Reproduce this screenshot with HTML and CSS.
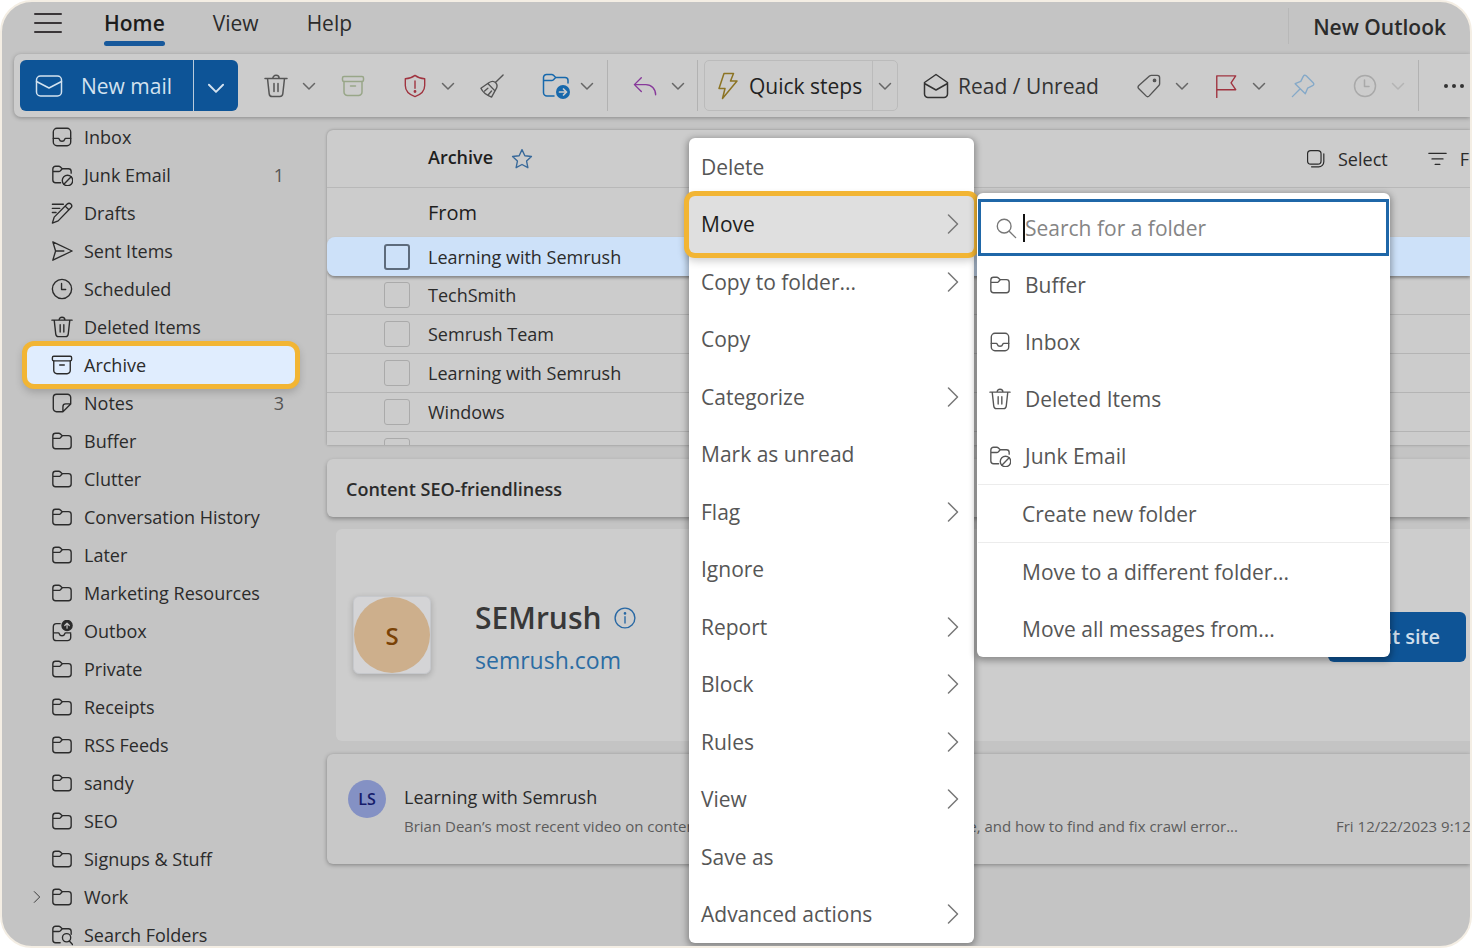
FILE: index.html
```html
<!DOCTYPE html>
<html lang="en">
<head>
    <meta charset="UTF-8">
    <title>Archive - Outlook</title>
    <link rel="stylesheet" href="styles.css">
</head>
<body>
<!-- icons -->
<svg class="sprite" aria-hidden="true">
    <symbol id="i-folder" viewBox="0 0 24 24"><path d="M2 17.500V6.500a3 3 0 0 1 3-3h3.500c.8 0 1.300.3 1.800.8l1.900 1.900H19a3 3 0 0 1 3 3v8.300a3 3 0 0 1-3 3H5a3 3 0 0 1-3-3zM2 9.200h6.500c.8 0 1.300-.3 1.800-.8l2-2.200"/></symbol>
    <symbol id="i-inbox" viewBox="0 0 24 24"><rect x="2.500" y="2.500" width="19" height="19" rx="4"/><path d="M2.500 13.500h5.500c.6 0 .8.400 1 1 .4 1.300 1.500 2.200 3 2.200s2.600-.9 3-2.200c.2-.6.4-1 1-1h5.500"/></symbol>
    <symbol id="i-junk" viewBox="0 0 24 24"><path d="M10.500 20.500H5a3 3 0 0 1-3-3V5.500a3 3 0 0 1 3-3h3.500c.8 0 1.300.3 1.800.8l1.900 1.900H19a3 3 0 0 1 3 3V10M2 8.200h6.500c.8 0 1.300-.3 1.800-.8l2-2.200"/><circle cx="18" cy="18" r="5.700"/><path d="M14 22l8-8"/></symbol>
    <symbol id="i-drafts" viewBox="0 0 24 24"><path d="M1.500 23l2-6.500L17.700 2.300a2.700 2.700 0 0 1 4 4L7.800 20.600zM15.500 4.500l4 4M1.500 2.500h12M1.500 7h8M1.500 11.500h4"/></symbol>
    <symbol id="i-sent" viewBox="0 0 24 24"><path d="M2 2l21 10L2 22l3-10zM5 12h9"/></symbol>
    <symbol id="i-clock" viewBox="0 0 24 24"><circle cx="12" cy="12" r="10.500"/><path d="M11.500 6v6.500H16"/></symbol>
    <symbol id="i-trash" viewBox="0 0 24 24"><path d="M1 4.500h22M8.800 4.500a3.200 3.200 0 0 1 6.400 0M3.500 4.500l1.700 15.300a3 3 0 0 0 3 2.700h7.600a3 3 0 0 0 3-2.700l1.700-15.300M10 9.500v8M14 9.500v8"/></symbol>
    <symbol id="i-archive" viewBox="0 0 24 24"><rect x="1.500" y="2.500" width="21" height="5" rx="1.500"/><path d="M3 7.500v10.500a3.500 3.500 0 0 0 3.500 3.500h11a3.500 3.500 0 0 0 3.500-3.500V7.500M9.500 12h5"/></symbol>
    <symbol id="i-note" viewBox="0 0 24 24"><path d="M13 21.500H6a3.500 3.500 0 0 1-3.500-3.500V6A3.500 3.500 0 0 1 6 2.500h12A3.500 3.500 0 0 1 21.500 6v7zM21.500 13H16a3 3 0 0 0-3 3v5.500"/></symbol>
    <symbol id="i-outbox" viewBox="0 0 24 24"><path d="M10 4H6a3.500 3.500 0 0 0-3.500 3.500V19A3.500 3.500 0 0 0 6 22.500h12a3.500 3.500 0 0 0 3.500-3.500v-4M2.500 14h5.500c.6 0 .8.400 1 1 .4 1.300 1.500 2.200 3 2.200s2.600-.9 3-2.200c.2-.6.4-1 1-1h5.500"/><circle cx="17.500" cy="6" r="5.500" fill="currentColor"/><path d="M17.500 9V3.500M15 6l2.500-2.500L20 6" stroke="#c4c4c4" stroke-width="1.300"/></symbol>
    <symbol id="i-searchfolder" viewBox="0 0 24 24"><path d="M10 20.500H5a3 3 0 0 1-3-3V5.500a3 3 0 0 1 3-3h3.500c.8 0 1.300.3 1.800.8l1.900 1.900H19a3 3 0 0 1 3 3v3M2 8.200h6.500c.8 0 1.300-.3 1.800-.8l2-2.200"/><circle cx="17" cy="15" r="4.500"/><path d="M20 18.500l3.500 4"/></symbol>
    <symbol id="i-down" viewBox="0 0 14 14"><path d="M1.500 4.500l5.500 5.500 5.500-5.500"/></symbol>
    <symbol id="i-right" viewBox="0 0 12 20"><path d="M1.500 1l9 9-9 9"/></symbol>
    <symbol id="i-mail" viewBox="0 0 28 24"><rect x="1.500" y="2" width="25" height="20" rx="4"/><path d="M1.500 7.500L14 14l12.500-6.500"/></symbol>
    <symbol id="i-shield" viewBox="0 0 24 26"><path d="M12 1.500c3 2.300 6.300 3.500 10.500 3.700v7.300c0 5.700-3.800 9.700-10.500 12-6.700-2.300-10.500-6.300-10.500-12V5.200C5.700 5 9 3.800 12 1.500zM12 7.500v8"/><circle cx="12" cy="19" r=".8" fill="currentColor"/></symbol>
    <symbol id="i-broom" viewBox="0 0 26 26"><path d="M25 1l-8.300 8.300M1 15.500l8.500-6c3-2 6-1.500 7.500 0s2 4.500 0 7.500L12.500 25c-4-1.500-9.500-5-11.500-9.500zM8.500 10.300l7.700 8M5 18.500l3.500-3M9 22.500l3.500-4"/></symbol>
    <symbol id="i-moveto" viewBox="0 0 28 26"><path d="M12 23H5a3.500 3.500 0 0 1-3.500-3.500v-15a3 3 0 0 1 3-3h5.200c.8 0 1.300.3 1.800.8l2.200 2.200h9.300a3 3 0 0 1 3 3V10M1.500 7.500h8.200c.8 0 1.300-.3 1.800-.8l2.200-2.200"/><circle cx="21" cy="19" r="7" fill="currentColor" stroke="none"/><path d="M17.500 19h7M21.500 16l3 3-3 3" stroke="#ccc" stroke-width="1.700"/></symbol>
    <symbol id="i-reply" viewBox="0 0 26 26"><path d="M9 4L1.500 11.500 9 19M1.500 11.500H14c6 0 10.500 4.500 10.500 11"/></symbol>
    <symbol id="i-bolt" viewBox="0 0 22 28"><path d="M7 1.500h9.500l-3 7.500H20L5.500 26.500 8 16.500H2z"/></symbol>
    <symbol id="i-open" viewBox="0 0 26 26"><path d="M1.500 9.500L13 1.500l11.500 8V21a3.500 3.500 0 0 1-3.500 3.500H5A3.500 3.500 0 0 1 1.500 21zM1.500 10.500L13 17l11.500-6.500"/></symbol>
    <symbol id="i-tag" viewBox="0 0 26 26"><path d="M15.500 1.500H22a2.500 2.500 0 0 1 2.500 2.500v6.500c0 .8-.3 1.500-.8 2L13.300 23.700a2.500 2.500 0 0 1-3.500 0L2 16a2.500 2.500 0 0 1 0-3.500L13.500 2.200c.5-.4 1.200-.7 2-.7z"/><circle cx="19" cy="7" r="1.300" fill="currentColor"/></symbol>
    <symbol id="i-flag" viewBox="0 0 24 26"><path d="M2 25.500V2h20.500l-5 7.500 5 7.500H2"/></symbol>
    <symbol id="i-pin" viewBox="0 0 26 26"><path d="M16.500 2l7.500 7.500c1.200 1.200.8 2.600-.6 3.200l-5.400 2.700-2.500 6.100-11-11 6.100-2.500 2.700-5.400c.6-1.400 2-1.800 3.200-.6zM10 16l-8.500 8.500"/></symbol>
    <symbol id="i-star" viewBox="0 0 24 24"><path d="M12 1.800l3.100 6.600 7.200.9-5.300 5 1.400 7.200L12 18l-6.400 3.500L7 14.300l-5.300-5 7.200-.9z"/></symbol>
    <symbol id="i-select" viewBox="0 0 24 24"><rect x="2" y="2" width="17" height="17" rx="4"/><path d="M7 22.500h9a6.500 6.500 0 0 0 6.500-6.500V6"/></symbol>
    <symbol id="i-filter" viewBox="0 0 24 24"><path d="M1 5.500h22M5 12.500h14M9 19.500h6"/></symbol>
    <symbol id="i-info" viewBox="0 0 24 24"><circle cx="12" cy="12" r="10.800"/><path d="M12 10.500v7"/><circle cx="12" cy="7" r=".7" fill="currentColor"/></symbol>
    <symbol id="i-search" viewBox="0 0 24 24"><circle cx="10" cy="10" r="7.500"/><path d="M15.500 15.500l7 7"/></symbol>
</svg>

<div class="app">
    <header class="top">
        <button class="burger" aria-label="Menu"><span></span><span></span><span></span></button>
        <nav class="tabs">
            <a href="#" class="active">Home</a>
            <a href="#">View</a>
            <a href="#">Help</a>
        </nav>
        <div class="brand">New Outlook</div>
    </header>

    <div class="toolbar">
        <div class="newmail">
            <button class="new-main"><svg class="icon mail"><use href="#i-mail"/></svg>New mail</button>
            <button class="new-more" aria-label="More new items"><svg class="icon down"><use href="#i-down"/></svg></button>
        </div>
        <div class="group">
            <button class="tool" aria-label="Delete"><svg class="icon"><use href="#i-trash"/></svg><svg class="icon chev"><use href="#i-down"/></svg></button>
            <button class="tool green" aria-label="Archive"><svg class="icon"><use href="#i-archive"/></svg></button>
            <button class="tool red" aria-label="Report"><svg class="icon"><use href="#i-shield"/></svg><svg class="icon chev"><use href="#i-down"/></svg></button>
            <button class="tool" aria-label="Sweep"><svg class="icon"><use href="#i-broom"/></svg></button>
            <button class="tool blue" aria-label="Move to"><svg class="icon wide"><use href="#i-moveto"/></svg><svg class="icon chev"><use href="#i-down"/></svg></button>
        </div>
        <div class="group line">
            <button class="tool purple" aria-label="Reply"><svg class="icon"><use href="#i-reply"/></svg><svg class="icon chev"><use href="#i-down"/></svg></button>
        </div>
        <div class="quick">
            <button class="quick-main"><svg class="icon bolt"><use href="#i-bolt"/></svg>Quick steps</button>
            <button class="quick-more" aria-label="More quick steps"><svg class="icon chev"><use href="#i-down"/></svg></button>
        </div>
        <div class="group">
            <button class="tool read"><svg class="icon wide"><use href="#i-open"/></svg>Read / Unread</button>
            <button class="tool" aria-label="Categorize"><svg class="icon"><use href="#i-tag"/></svg><svg class="icon chev"><use href="#i-down"/></svg></button>
            <button class="tool red" aria-label="Flag"><svg class="icon"><use href="#i-flag"/></svg><svg class="icon chev"><use href="#i-down"/></svg></button>
            <button class="tool pale" aria-label="Pin"><svg class="icon"><use href="#i-pin"/></svg></button>
            <button class="tool off" aria-label="Snooze"><svg class="icon"><use href="#i-clock"/></svg><svg class="icon chev"><use href="#i-down"/></svg></button>
        </div>
        <div class="group line">
            <button class="dots" aria-label="More options"><span></span><span></span><span></span></button>
        </div>
    </div>

    <div class="main">
        <ul class="folders">
            <li><a href="#"><svg class="icon"><use href="#i-inbox"/></svg>Inbox</a></li>
            <li><a href="#"><svg class="icon"><use href="#i-junk"/></svg>Junk Email<b>1</b></a></li>
            <li><a href="#"><svg class="icon"><use href="#i-drafts"/></svg>Drafts</a></li>
            <li><a href="#"><svg class="icon"><use href="#i-sent"/></svg>Sent Items</a></li>
            <li><a href="#"><svg class="icon"><use href="#i-clock"/></svg>Scheduled</a></li>
            <li><a href="#"><svg class="icon"><use href="#i-trash"/></svg>Deleted Items</a></li>
            <li><a href="#" class="active"><svg class="icon"><use href="#i-archive"/></svg>Archive</a></li>
            <li><a href="#"><svg class="icon"><use href="#i-note"/></svg>Notes<b>3</b></a></li>
            <li><a href="#"><svg class="icon"><use href="#i-folder"/></svg>Buffer</a></li>
            <li><a href="#"><svg class="icon"><use href="#i-folder"/></svg>Clutter</a></li>
            <li><a href="#"><svg class="icon"><use href="#i-folder"/></svg>Conversation History</a></li>
            <li><a href="#"><svg class="icon"><use href="#i-folder"/></svg>Later</a></li>
            <li><a href="#"><svg class="icon"><use href="#i-folder"/></svg>Marketing Resources</a></li>
            <li><a href="#"><svg class="icon"><use href="#i-outbox"/></svg>Outbox</a></li>
            <li><a href="#"><svg class="icon"><use href="#i-folder"/></svg>Private</a></li>
            <li><a href="#"><svg class="icon"><use href="#i-folder"/></svg>Receipts</a></li>
            <li><a href="#"><svg class="icon"><use href="#i-folder"/></svg>RSS Feeds</a></li>
            <li><a href="#"><svg class="icon"><use href="#i-folder"/></svg>sandy</a></li>
            <li><a href="#"><svg class="icon"><use href="#i-folder"/></svg>SEO</a></li>
            <li><a href="#"><svg class="icon"><use href="#i-folder"/></svg>Signups &amp; Stuff</a></li>
            <li><a href="#" class="parent"><svg class="icon expand"><use href="#i-right"/></svg><svg class="icon"><use href="#i-folder"/></svg>Work</a></li>
            <li><a href="#"><svg class="icon"><use href="#i-searchfolder"/></svg>Search Folders</a></li>
        </ul>

        <div class="content">
            <section class="list">
                <div class="list-head">
                    <h2>Archive</h2>
                    <button class="star" aria-label="Add to favorites"><svg class="icon"><use href="#i-star"/></svg></button>
                    <div class="list-tools">
                        <button><svg class="icon"><use href="#i-select"/></svg>Select</button>
                        <button><svg class="icon"><use href="#i-filter"/></svg>Filter</button>
                    </div>
                </div>
                <table>
                    <thead>
                        <tr><th class="check"></th><th>From</th></tr>
                    </thead>
                    <tbody>
                        <tr class="selected"><td class="check"><input type="checkbox" id="m1"></td><td><label for="m1">Learning with Semrush</label></td></tr>
                        <tr><td class="check"><input type="checkbox" id="m2"></td><td><label for="m2">TechSmith</label></td></tr>
                        <tr><td class="check"><input type="checkbox" id="m3"></td><td><label for="m3">Semrush Team</label></td></tr>
                        <tr><td class="check"><input type="checkbox" id="m4"></td><td><label for="m4">Learning with Semrush</label></td></tr>
                        <tr><td class="check"><input type="checkbox" id="m5"></td><td><label for="m5">Windows</label></td></tr>
                        <tr><td class="check"><input type="checkbox" id="m6" aria-label="Select message"></td><td></td></tr>
                    </tbody>
                </table>
            </section>

            <h3 class="subject">Content SEO-friendliness</h3>

            <section class="sender">
                <div class="logo"><span>S</span></div>
                <div class="sender-info">
                    <h1>SEMrush <svg class="icon"><use href="#i-info"/></svg></h1>
                    <a href="#">semrush.com</a>
                </div>
                <button class="visit">Visit site</button>
            </section>

            <article class="message">
                <div class="avatar">LS</div>
                <div class="message-text">
                    <h4>Learning with Semrush</h4>
                    <div class="preview">
                        <p><span>Brian Dean’s most recent video on content</span><span>site, and how to find and fix crawl error...</span></p>
                        <time>Fri 12/22/2023 9:12</time>
                    </div>
                </div>
            </article>
        </div>
    </div>

    <ul class="menu">
        <li><button>Delete</button></li>
        <li><button class="active">Move<svg class="icon"><use href="#i-right"/></svg></button></li>
        <li><button>Copy to folder...<svg class="icon"><use href="#i-right"/></svg></button></li>
        <li><button>Copy</button></li>
        <li><button>Categorize<svg class="icon"><use href="#i-right"/></svg></button></li>
        <li><button>Mark as unread</button></li>
        <li><button>Flag<svg class="icon"><use href="#i-right"/></svg></button></li>
        <li><button>Ignore</button></li>
        <li><button>Report<svg class="icon"><use href="#i-right"/></svg></button></li>
        <li><button>Block<svg class="icon"><use href="#i-right"/></svg></button></li>
        <li><button>Rules<svg class="icon"><use href="#i-right"/></svg></button></li>
        <li><button>View<svg class="icon"><use href="#i-right"/></svg></button></li>
        <li><button>Save as</button></li>
        <li><button>Advanced actions<svg class="icon"><use href="#i-right"/></svg></button></li>
    </ul>

    <div class="submenu">
        <div class="search">
            <svg class="icon"><use href="#i-search"/></svg>
            <span class="caret"></span>
            <input type="text" placeholder="Search for a folder" aria-label="Search for a folder">
        </div>
        <button><svg class="icon"><use href="#i-folder"/></svg>Buffer</button>
        <button><svg class="icon"><use href="#i-inbox"/></svg>Inbox</button>
        <button><svg class="icon"><use href="#i-trash"/></svg>Deleted Items</button>
        <button><svg class="icon"><use href="#i-junk"/></svg>Junk Email</button>
        <hr>
        <button class="plain">Create new folder</button>
        <hr>
        <button class="plain">Move to a different folder...</button>
        <button class="plain">Move all messages from...</button>
    </div>
</div>
</body>
</html>
```

FILE: styles.css
```css
*{margin: 0;padding: 0;box-sizing: border-box;}
ul{list-style: none;}
a{text-decoration: none;color: inherit;}
button{border: 0;background: none;font: inherit;color: inherit;cursor: pointer;}
body{background: #fff;font-family: "Open Sans","Noto Sans",sans-serif;font-size: 18px;line-height: 24px;color: #2b2b2b;}
.sprite{display: none;}
.icon{width: 24px;height: 24px;flex: none;fill: none;stroke: currentColor;stroke-width: 1.5;stroke-linejoin: round;stroke-linecap: round;}

.app{position: relative;display: flex;flex-direction: column;height: 100vh;overflow: hidden;background: #c4c4c4;border: 2px solid #f4eee4;border-radius: 32px;}

/* top bar */
.top{display: flex;flex: none;height: 52px;padding: 0 24px 0 32px;}
.burger{display: flex;flex-direction: column;justify-content: space-between;width: 28px;height: 20px;margin-top: 11px;}
.burger span{height: 2px;background: #3a3638;border-radius: 1px;}
.tabs{display: flex;gap: 48px;margin-left: 42px;padding-top: 5px;font-size: 21px;line-height: 32px;}
.tabs a.active{font-weight: 600;color: #1c1c1c;}
.tabs a.active:after{content: "";display: block;height: 5px;margin-top: 2px;border-radius: 3px;background: #17599c;}
.brand{height: 36px;margin: 6px 0 0 auto;padding-left: 24px;border-left: 1px solid #b8b8b8;font-size: 21px;line-height: 38px;font-weight: 600;}

/* toolbar */
.toolbar{display: flex;flex: none;align-items: center;height: 63px;margin-left: 12px;padding-left: 6px;background: #ccc;border-radius: 7px 0 0 7px;box-shadow: 0 1px 4px rgba(0,0,0,.3);font-size: 21px;white-space: nowrap;}
.newmail{display: flex;flex: none;height: 51px;margin-right: 26px;border-radius: 6px;background: #0d5497;color: #d3e2ef;overflow: hidden;}
.new-main{display: flex;align-items: center;gap: 18px;width: 173px;padding-left: 15px;}
.new-more{width: 45px;border-left: 1px solid #b9cbdc;}
.mail{width: 28px;}
.down{width: 18px;height: 18px;vertical-align: middle;}
.group{display: flex;flex: none;align-items: center;gap: 25px;}
.group.line{height: 51px;margin-left: 13px;padding-left: 25px;border-left: 1px solid #b2b2b2;}
.tool{display: flex;align-items: center;gap: 14px;height: 40px;padding-right: 13px;color: #555;}
.tool:has(.chev){padding-right: 0;}
.tool .wide{width: 28px;height: 26px;}
.tool .wide + .chev{margin-left: -4px;}
.tool.read{gap: 8px;color: #333;}
.tool.green{color: #98a688;}
.tool.red{color: #a03440;}
.tool.blue{color: #1668ac;}
.tool.purple{color: #87399a;}
.tool.pale{color: #85a9c8;}
.tool.off{color: #a9a9a9;}
.chev{width: 14px;height: 14px;color: #666;}
.off .chev{color: #b4b4b4;}
.quick{display: flex;flex: none;height: 51px;margin: 0 24px 0 6px;border: 1px solid #bbb;border-radius: 5px;}
.group.line:has(+ .quick){padding-right: 12px;border-right: 1px solid #b2b2b2;}
.quick-main{display: flex;align-items: center;gap: 10px;width: 167px;padding-left: 12px;color: #222;}
.quick-more{width: 25px;border-left: 1px solid #bbb;line-height: 14px;}
.bolt{width: 22px;height: 28px;color: #8c7424;}
.dots{display: flex;gap: 4px;}
.dots span{width: 4px;height: 4px;border-radius: 50%;background: #333;}

/* folders */
.main{display: flex;flex: 1;min-height: 0;padding-top: 1px;}
.folders{flex: none;width: 268px;margin-left: 25px;}
.folders a{display: flex;align-items: center;gap: 11px;height: 38px;padding: 0 11px 0 24px;}
.folders .icon{width: 22px;height: 22px;}
.folders b{margin-left: auto;font-weight: 400;color: #555;}
.folders a.active{background: #e0edfe;border-radius: 7px;box-shadow: 0 0 0 5px #f2b534,0 4px 8px 4px rgba(0,0,0,.2);}
.folders a.parent{padding-left: 6px;}
.folders .expand{width: 8px;height: 12px;margin-right: -1px;}

/* message list */
.content{display: flex;flex: 1;flex-direction: column;min-width: 0;margin-left: 32px;padding-top: 12px;}
.list{flex: none;height: 315px;overflow: hidden;background: #ccc;border-radius: 6px 0 0 0;box-shadow: 0 0 3px rgba(0,0,0,.3);}
.list-head{display: flex;align-items: center;height: 58px;padding-left: 101px;border-bottom: 1px solid #b8b8b8;}
.list-head h2{padding-bottom: 3px;font-size: 18px;font-weight: 600;color: #1e1e1e;}
.star{display: flex;margin-left: 18px;color: #38699a;}
.star .icon{width: 22px;height: 22px;}
.list-tools{display: flex;gap: 40px;width: 164px;margin-left: auto;}
.list-tools button{display: flex;align-items: center;gap: 13px;}
.list-tools .icon{width: 19px;height: 19px;}
table{width: 100%;border-spacing: 0;}
th{height: 49px;font-size: 20px;font-weight: 400;text-align: left;color: #1e1e1e;}
td{height: 39px;border-bottom: 1px solid #b4b4b4;}
.check{width: 101px;padding-left: 57px;font-size: 0;}
input[type=checkbox]{display: block;width: 26px;height: 26px;appearance: none;border: 1px solid #aaa;border-radius: 3px;}
.selected{border-radius: 8px 0 0 8px;box-shadow: 0 2px 3px rgba(0,0,0,.35);}
.selected td{background: #cde1f9;border: 0;}
.selected td:first-child{border-radius: 8px 0 0 8px;}
.selected input[type=checkbox]{border: 2px solid #5d6b7c;}

/* reading pane */
.subject{flex: none;height: 58px;margin-top: 14px;padding-left: 19px;line-height: 60px;font-size: 18px;font-weight: 600;background: #ccc;border-radius: 6px 0 0 6px;box-shadow: 0 2px 4px rgba(0,0,0,.3);}
.sender{display: flex;flex: none;align-items: center;height: 212px;margin: 12px 0 0 9px;padding: 0 4px 0 17px;background: #cdcdcd;border-radius: 6px 0 0 6px;}
.logo{width: 78px;height: 78px;border: 1px solid #c6c8cc;border-radius: 6px;background: #d4d4d6;box-shadow: 0 2px 6px rgba(0,0,0,.2);}
.logo span{display: block;height: 76px;border-radius: 50%;background: #cdaf8c;text-align: center;line-height: 78px;font-size: 24px;font-weight: 600;color: #7a4205;}
.sender-info{margin-left: 44px;padding-top: 6px;}
.sender-info h1{display: flex;align-items: center;gap: 12px;font-size: 30px;line-height: 44px;font-weight: 600;color: #383838;}
.sender-info .icon{width: 22px;height: 22px;color: #2868a4;}
.sender-info a{display: block;font-size: 23px;line-height: 40px;color: #2b6ca3;}
.visit{width: 138px;height: 50px;margin: 4px 0 0 auto;padding-right: 26px;text-align: right;border-radius: 6px;background: #0e5496;color: #cfdeeb;font-size: 20px;font-weight: 600;}
.message{display: flex;flex: none;height: 110px;margin-top: 13px;padding: 26px 0 0 21px;background: #c8c8c8;border-radius: 6px 0 0 6px;box-shadow: 0 1px 4px rgba(0,0,0,.35);}
.avatar{flex: none;width: 38px;height: 38px;border-radius: 50%;background: #8491c4;text-align: center;line-height: 38px;font-size: 16px;font-weight: 600;color: #151b6b;}
.message-text{flex: 1;min-width: 0;margin-left: 18px;padding-top: 5px;}
.message-text h4{font-size: 18px;font-weight: 400;}
.preview{display: flex;margin-top: 5px;font-size: 15px;color: #5c5c5c;white-space: nowrap;}
.preview p{display: flex;flex: 1;justify-content: space-between;}
.preview time{flex: none;width: 134px;margin-left: 98px;}

/* context menu */
.menu,.submenu{position: absolute;background: #fff;border-radius: 6px;box-shadow: 0 2px 6px 2px rgba(0,0,0,.3);font-size: 21px;color: #565656;}
.menu{display: flex;flex-direction: column;top: 136px;bottom: 3px;left: 687px;width: 285px;}
.menu li{flex: 1;min-height: 40px;}
.menu button{display: flex;align-items: center;justify-content: space-between;width: 100%;height: 100%;padding: 0 15px 0 12px;}
.menu .icon{width: 12px;height: 20px;color: #777;}
.menu button.active{background: #dfdfdf;border-radius: 6px;box-shadow: 0 0 0 5px #f2b534,0 4px 8px 4px rgba(0,0,0,.2);color: #1e1e1e;}
.submenu{top: 191px;left: 975px;width: 413px;padding: 6px 1px 0;}
.search{display: flex;align-items: center;height: 57px;padding-left: 14px;border: 3px solid #1f67a8;}
.search .icon{width: 22px;height: 22px;color: #777;}
.caret{width: 2px;height: 28px;margin-left: 6px;background: #111;}
.search input{flex: 1;min-width: 0;border: 0;outline: 0;background: none;font: inherit;}
.search input::placeholder{color: #858585;}
.submenu button{display: flex;align-items: center;gap: 14px;width: 100%;height: 57px;padding-left: 11px;}
.submenu button.plain{padding-left: 44px;}
.submenu button .icon{width: 22px;height: 22px;}
.submenu hr{border: 0;border-top: 1px solid #ececec;}
```
